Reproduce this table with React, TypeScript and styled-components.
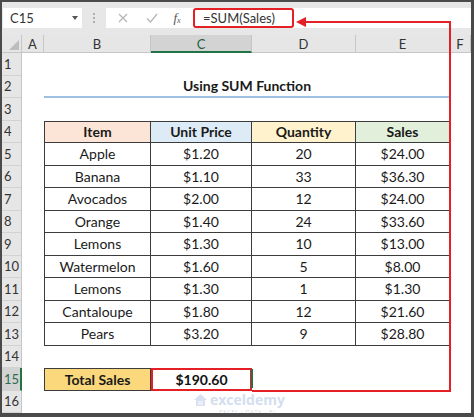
import React from "react";
import styled, { createGlobalStyle } from "styled-components";

const GlobalStyle = createGlobalStyle`
  html, body { margin: 0; padding: 0; background: #ffffff; }
  * { box-sizing: border-box; }
`;

const FONT = `"Lato", "Open Sans", "Liberation Sans", sans-serif`;

const Frame = styled.div`
  position: relative;
  width: 474px;
  height: 417px;
  background: #4a4a4a;
  padding: 2px 3px 4px 2px;
  display: flex;
  flex-direction: column;
  overflow: hidden;
  font-family: ${FONT};
`;

const FormulaRow = styled.div`
  height: 33px;
  flex: none;
  background: #e7e7e7;
  display: flex;
  align-items: flex-start;
  padding-top: 6px;
`;

const NameBox = styled.div`
  margin-left: 1px;
  width: 79px;
  height: 20px;
  background: #ffffff;
  display: flex;
  align-items: center;
  justify-content: space-between;
  padding: 0 4px 0 7px;
  font-size: 13px;
  color: #333333;
`;

const Caret = styled.span`
  width: 0;
  height: 0;
  border-left: 3px solid transparent;
  border-right: 3px solid transparent;
  border-top: 4px solid #555555;
`;

const Grip = styled.div`
  width: 24px;
  height: 20px;
  display: flex;
  flex-direction: column;
  align-items: center;
  justify-content: center;
  gap: 2px;
  & > i {
    width: 2px;
    height: 2px;
    background: #b0b0b0;
    display: block;
  }
`;

const FormulaBar = styled.div`
  flex: 1;
  height: 20px;
  background: #ffffff;
  display: flex;
  align-items: center;
  padding-left: 2px;
`;

const IconSlot = styled.div<{ $w: number }>`
  width: ${(p) => p.$w}px;
  height: 20px;
  display: flex;
  align-items: center;
  justify-content: center;
`;

const Fx = styled.span`
  font-family: "Liberation Serif", "DejaVu Serif", serif;
  font-style: italic;
  font-size: 13px;
  color: #555555;
  & sub {
    font-size: 8px;
    vertical-align: -1px;
  }
`;

const FormulaText = styled.div`
  margin-left: 5px;
  width: 101px;
  height: 20px;
  border: 2px solid #e41f26;
  border-radius: 3px;
  display: flex;
  align-items: center;
  padding-left: 8px;
  font-size: 13px;
  color: #333333;
`;

const Sheet = styled.div`
  flex: 1;
  display: grid;
  grid-template-columns: 20px 22px 107px 101px 104px 94px 21px;
  grid-template-rows: 18px repeat(16, 22.5px);
  background: #ffffff;
`;

const Corner = styled.div`
  grid-row: 1;
  grid-column: 1;
  background: #e6e6e6;
  border-right: 1px solid #c6c6c6;
  border-bottom: 1px solid #c6c6c6;
  position: relative;
  &::after {
    content: "";
    position: absolute;
    right: 2px;
    bottom: 2px;
    width: 0;
    height: 0;
    border-left: 10px solid transparent;
    border-bottom: 10px solid #bcbcbc;
  }
`;

const ColHead = styled.div<{ $col: number; $sel?: boolean }>`
  grid-row: 1;
  grid-column: ${(p) => p.$col};
  background: ${(p) => (p.$sel ? "#d3d3d3" : "#e6e6e6")};
  border-right: 1px solid #c6c6c6;
  border-bottom: ${(p) => (p.$sel ? "2px solid #217346" : "1px solid #c6c6c6")};
  display: flex;
  align-items: center;
  justify-content: center;
  font-size: 13px;
  color: ${(p) => (p.$sel ? "#1f5f3c" : "#333333")};
  padding-top: 1px;
`;

const RowHead = styled.div<{ $row: number; $sel?: boolean }>`
  grid-row: ${(p) => p.$row + 1};
  grid-column: 1;
  background: ${(p) => (p.$sel ? "#d3d3d3" : "#e6e6e6")};
  border-right: ${(p) => (p.$sel ? "2px solid #217346" : "1px solid #c6c6c6")};
  border-bottom: 1px solid #d2d2d2;
  display: flex;
  align-items: center;
  padding-left: 2px;
  font-size: 13px;
  color: ${(p) => (p.$sel ? "#2e6b4a" : "#333333")};
`;

const Title = styled.div`
  grid-row: 3;
  grid-column: 3 / 7;
  border-bottom: 2px solid #9dc0e4;
  display: flex;
  align-items: center;
  justify-content: center;
  font-size: 14px;
  font-weight: 700;
  color: #1a1a1a;
`;

const Cell = styled.div<{
  $row: number;
  $col: number;
  $bg?: string;
  $bold?: boolean;
  $first?: boolean;
  $leftEdge?: boolean;
}>`
  grid-row: ${(p) => p.$row + 1};
  grid-column: ${(p) => p.$col};
  background: ${(p) => p.$bg || "#ffffff"};
  border-right: 1px solid #3c3c3c;
  border-bottom: 1px solid #3c3c3c;
  border-top: ${(p) => (p.$first ? "1px solid #3c3c3c" : "none")};
  border-left: ${(p) => (p.$leftEdge ? "1px solid #3c3c3c" : "none")};
  display: flex;
  align-items: center;
  justify-content: center;
  font-size: 14px;
  font-weight: ${(p) => (p.$bold ? 700 : 400)};
  color: #1a1a1a;
`;

const TotalValue = styled.div`
  grid-row: 16;
  grid-column: 4;
  position: relative;
  background: #ffffff;
  border: 2px solid #e41f26;
  display: flex;
  align-items: center;
  justify-content: center;
  font-size: 14px;
  font-weight: 700;
  color: #111111;
  &::after {
    content: "";
    position: absolute;
    right: -3px;
    top: -1px;
    bottom: 1px;
    width: 2px;
    background: #217346;
  }
`;

const Overlay = styled.svg`
  position: absolute;
  left: 0;
  top: 0;
  pointer-events: none;
`;

const Watermark = styled.div`
  position: absolute;
  left: 193px;
  top: 393px;
  display: flex;
  align-items: flex-start;
  gap: 2px;
  opacity: 0.3;
  pointer-events: none;
`;

const WmText = styled.div`
  display: flex;
  flex-direction: column;
  align-items: center;
  & > b {
    display: block;
    font-family: "Open Sans", sans-serif;
    font-size: 14px;
    line-height: 14px;
    font-weight: 700;
    color: #6f93c9;
  }
  & > small {
    display: block;
    font-size: 5px;
    line-height: 6px;
    color: #7a8aa0;
    letter-spacing: 1px;
    margin-top: 2px;
  }
`;

type Row = [string, string, string, string];

const rows: Row[] = [
  ["Apple", "$1.20", "20", "$24.00"],
  ["Banana", "$1.10", "33", "$36.30"],
  ["Avocados", "$2.00", "12", "$24.00"],
  ["Orange", "$1.40", "24", "$33.60"],
  ["Lemons", "$1.30", "10", "$13.00"],
  ["Watermelon", "$1.60", "5", "$8.00"],
  ["Lemons", "$1.30", "1", "$1.30"],
  ["Cantaloupe", "$1.80", "12", "$21.60"],
  ["Pears", "$3.20", "9", "$28.80"],
];

const headers: { label: string; bg: string }[] = [
  { label: "Item", bg: "#fce4d6" },
  { label: "Unit Price", bg: "#ddebf7" },
  { label: "Quantity", bg: "#fff2cc" },
  { label: "Sales", bg: "#e2efda" },
];

const colLetters = ["A", "B", "C", "D", "E", "F"];

export default function App() {
  return (
    <>
      <GlobalStyle />
      <Frame>
        <FormulaRow>
          <NameBox>
            <span>C15</span>
            <Caret />
          </NameBox>
          <Grip>
            <i />
            <i />
            <i />
          </Grip>
          <FormulaBar>
            <IconSlot $w={29}>
              <svg width="10" height="10" viewBox="0 0 10 10">
                <path d="M1 1 L9 9 M9 1 L1 9" stroke="#b4b4b4" strokeWidth="1.2" fill="none" />
              </svg>
            </IconSlot>
            <IconSlot $w={29}>
              <svg width="12" height="10" viewBox="0 0 12 10">
                <path d="M1 5.5 L4.5 9 L11 1" stroke="#b4b4b4" strokeWidth="1.2" fill="none" />
              </svg>
            </IconSlot>
            <IconSlot $w={22}>
              <Fx>
                f<sub>x</sub>
              </Fx>
            </IconSlot>
            <FormulaText>=SUM(Sales)</FormulaText>
          </FormulaBar>
        </FormulaRow>
        <Sheet>
          <Corner />
          {colLetters.map((c, i) => (
            <ColHead key={c} $col={i + 2} $sel={c === "C"}>
              {c}
            </ColHead>
          ))}
          {Array.from({ length: 16 }, (_, i) => (
            <RowHead key={i} $row={i + 1} $sel={i + 1 === 15}>
              {i + 1}
            </RowHead>
          ))}
          <Title>Using SUM Function</Title>
          {headers.map((h, i) => (
            <Cell key={h.label} $row={4} $col={i + 3} $bg={h.bg} $bold $first $leftEdge={i === 0}>
              {h.label}
            </Cell>
          ))}
          {rows.map((r, ri) =>
            r.map((v, ci) => (
              <Cell key={`${ri}-${ci}`} $row={5 + ri} $col={ci + 3} $leftEdge={ci === 0}>
                {v}
              </Cell>
            ))
          )}
          <Cell $row={15} $col={3} $bg="#fbd87c" $bold $first $leftEdge>
            Total Sales
          </Cell>
          <TotalValue>$190.60</TotalValue>
        </Sheet>
        <Watermark>
          <svg width="15" height="14" viewBox="0 0 15 14">
            <path d="M1 7 L7.5 1 L14 7 L12 7 L12 13 L3 13 L3 7 Z" fill="#7d9fd3" />
            <path d="M5 9 L10 9 M5 11 L10 11" stroke="#ffffff" strokeWidth="1" />
          </svg>
          <WmText>
            <b>exceldemy</b>
            <small>EXCEL · DATA · BI</small>
          </WmText>
        </Watermark>
        <Overlay width="474" height="417" viewBox="0 0 474 417">
          <path d="M303 22 H450 V391 H252" stroke="#e41f26" strokeWidth="2" fill="none" />
          <polygon points="296,22 306,17 306,27" fill="#e41f26" />
        </Overlay>
      </Frame>
    </>
  );
}
